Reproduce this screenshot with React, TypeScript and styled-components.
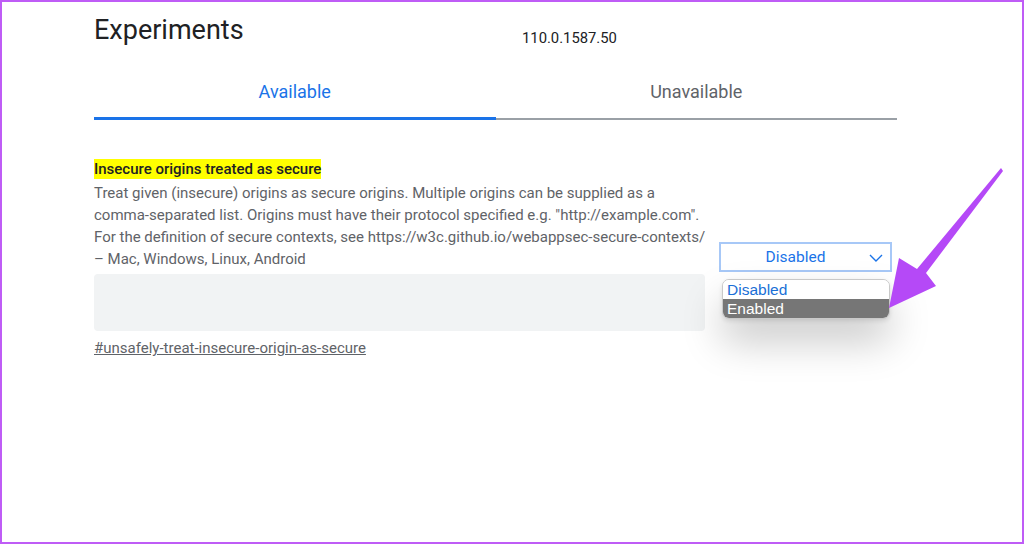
import React from 'react';
import styled, { createGlobalStyle } from 'styled-components';

const GlobalStyle = createGlobalStyle`
  html, body {
    margin: 0;
    padding: 0;
    background: #ffffff;
  }
  * {
    box-sizing: border-box;
  }
`;

export const Page = styled.div`
  position: relative;
  width: 1024px;
  height: 544px;
  border: 2px solid #bf5cf6;
  background: #ffffff;
  overflow: hidden;
  font-family: Roboto, 'Liberation Sans', Arial, sans-serif;
  color: #202124;
`;

export const Column = styled.div`
  width: 803px;
  margin-left: 92px;
`;

export const Header = styled.header`
  display: grid;
  grid-template-columns: 428px auto;
  padding-top: 12px;
`;

export const Title = styled.h1`
  margin: 0;
  font-size: 27px;
  font-weight: 400;
  line-height: 32px;
  color: #202124;
`;

export const Version = styled.span`
  margin-top: 14px;
  font-size: 14.8px;
  line-height: 20px;
  color: #202124;
`;

export const Tabs = styled.nav`
  display: grid;
  grid-template-columns: 1fr 1fr;
  align-items: end;
`;

export const Tab = styled.div<{ $active?: boolean }>`
  padding: 32px 0 ${(props) => (props.$active ? '13px' : '14px')};
  text-align: center;
  font-size: 18px;
  line-height: 24px;
  color: ${(props) => (props.$active ? '#1a73e8' : '#5f6368')};
  border-bottom: ${(props) => (props.$active ? '3px solid #1a73e8' : '2px solid #9aa0a6')};
`;

export const Experiment = styled.section`
  display: flex;
  align-items: center;
  gap: 14px;
  padding-top: 39px;
`;

export const ExperimentText = styled.div`
  width: 611px;
  display: flex;
  flex-direction: column;
  align-items: flex-start;
`;

export const ExperimentName = styled.h3`
  margin: 0;
  font-size: 15px;
  font-weight: 500;
  line-height: 20px;
  color: #202124;
`;

export const Highlight = styled.mark`
  display: inline-block;
  height: 20px;
  line-height: 20px;
  background: #ffff00;
  color: inherit;
  padding: 0;
`;

export const Description = styled.p`
  margin: 3px 0 0;
  font-size: 15px;
  line-height: 22px;
  color: #5f6368;
  white-space: nowrap;
`;

export const OriginsField = styled.div`
  align-self: stretch;
  margin-top: 4px;
  height: 57px;
  border-radius: 4px;
  background: #f1f3f4;
`;

export const Permalink = styled.a`
  display: block;
  margin-top: 7px;
  font-size: 15px;
  line-height: 20px;
  color: #5f6368;
  text-decoration: underline;
`;

export const SelectWrap = styled.div`
  position: relative;
  width: 173px;
  margin-bottom: 4px;
`;

export const SelectBox = styled.div`
  display: flex;
  align-items: center;
  justify-content: center;
  height: 30px;
  padding-right: 20px;
  border: 2px solid #a7c8f7;
  background: #ffffff;
  color: #1a73e8;
  font-size: 15.5px;
  position: relative;
`;

export const Chevron = styled.svg`
  position: absolute;
  right: 7px;
  top: 10px;
`;

export const Menu = styled.ul`
  position: absolute;
  top: 37px;
  left: 3px;
  width: 168px;
  margin: 0;
  padding: 0;
  list-style: none;
  border: 1px solid #c9c9c9;
  border-radius: 7px;
  overflow: hidden;
  background: #ffffff;
  box-shadow: 0 22px 40px rgba(0, 0, 0, 0.22), 0 2px 4px rgba(0, 0, 0, 0.1);
  font-family: 'Liberation Sans', Arial, sans-serif;
  font-size: 15.5px;
`;

export const MenuItem = styled.li<{ $selected?: boolean }>`
  height: 19px;
  line-height: 19px;
  padding-left: 4px;
  background: ${(props) => (props.$selected ? '#767676' : '#ffffff')};
  color: ${(props) => (props.$selected ? '#ffffff' : '#1a6fd6')};
`;

export const Pointer = styled.svg`
  position: absolute;
  left: 880px;
  top: 160px;
`;

const descriptionLines = [
  'Treat given (insecure) origins as secure origins. Multiple origins can be supplied as a',
  'comma-separated list. Origins must have their protocol specified e.g. "http://example.com".',
  'For the definition of secure contexts, see https://w3c.github.io/webappsec-secure-contexts/',
  '– Mac, Windows, Linux, Android',
];

const App = () => {
  return (
    <>
      <GlobalStyle />
      <Page>
        <Column>
          <Header>
            <Title>Experiments</Title>
            <Version>110.0.1587.50</Version>
          </Header>
          <Tabs>
            <Tab $active>Available</Tab>
            <Tab>Unavailable</Tab>
          </Tabs>
          <Experiment>
            <ExperimentText>
              <ExperimentName>
                <Highlight>Insecure origins treated as secure</Highlight>
              </ExperimentName>
              <Description>
                {descriptionLines.map((line, i) => (
                  <React.Fragment key={i}>
                    {line}
                    {i < descriptionLines.length - 1 && <br />}
                  </React.Fragment>
                ))}
              </Description>
              <OriginsField />
              <Permalink href="#unsafely-treat-insecure-origin-as-secure">
                #unsafely-treat-insecure-origin-as-secure
              </Permalink>
            </ExperimentText>
            <SelectWrap>
              <SelectBox>
                Disabled
                <Chevron width="14" height="8" viewBox="0 0 14 8">
                  <path d="M1 1 L7 7 L13 1" fill="none" stroke="#1a73e8" strokeWidth="1.4" />
                </Chevron>
              </SelectBox>
              <Menu>
                <MenuItem>Disabled</MenuItem>
                <MenuItem $selected>Enabled</MenuItem>
              </Menu>
            </SelectWrap>
          </Experiment>
        </Column>
        <Pointer width="130" height="160" viewBox="880 160 130 160">
          <path
            d="M999 166 L1001 169 L924 271 L934 284 L887 306 L897 256 L915 267 Z"
            fill="#b549f7"
          />
        </Pointer>
      </Page>
    </>
  );
};

export default App;
